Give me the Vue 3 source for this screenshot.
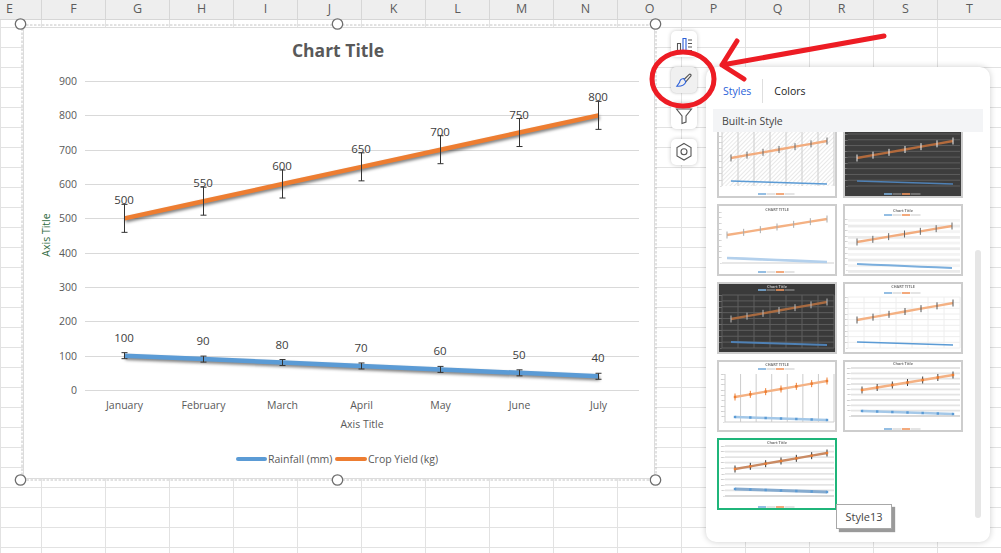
<script setup>
const columns = ['E','F','G','H','I','J','K','L','M','N','O','P','Q','R','S','T']
const months = ['January','February','March','April','May','June','July']
const crop = [500,550,600,650,700,750,800]
const rain = [100,90,80,70,60,50,40]
const ticks = [900,800,700,600,500,400,300,200,100,0]
const xAt = i => 124.5 + i * 79
const yAt = v => 390 - v * 0.3433
const line = vals => vals.map((v, i) => `${xAt(i)},${yAt(v)}`).join(' ')
const handles = [[20.5,24],[337.5,24],[655.5,24],[20.5,480],[337.5,480],[655.5,480]]

const lerp = (a, b, i) => a + (b - a) * i / 6
const thumbs = [
  { id:1, cls:'hatch', title:'', x0:14,x1:110, o0:32,o1:15, b0:55,b1:58, top:4,bottom:60, left:5,right:117, legend:68, hgrid:0, vgrid:1, orange:'#f2ac7e', err:'#666', blue:'#5b9bd5', bw:1.300 },
  { id:2, cls:'dark', title:'', x0:14,x1:110, o0:32,o1:15, b0:55,b1:58, top:8,bottom:60, left:5,right:117, legend:68, hgrid:1, vgrid:0, orange:'#b26a3c', err:'#eee', blue:'#4f81b5', bw:1.300 },
  { id:3, cls:'plain', title:'CHART TITLE', tY:5, x0:10,x1:110, o0:31,o1:15, b0:54,b1:58, top:8,bottom:59, left:5,right:117, legend:68, hgrid:0, vgrid:0, orange:'#f4b183', err:'#aaa', blue:'#b3d0ec', bw:2.600, axis:1 },
  { id:4, cls:'bands', title:'Chart Title', tY:6, legendTop:11, x0:14,x1:109, o0:38,o1:22, b0:60,b1:64, top:15,bottom:66, left:5,right:117, legend:0, hgrid:0, vgrid:0, orange:'#f2ac7e', err:'#666', blue:'#7aaedd', bw:2 },
  { id:5, cls:'charcoal', title:'Chart Title', tY:4, legendTop:8, x0:14,x1:110, o0:37,o1:20, b0:60,b1:63, top:13,bottom:66, left:5,right:117, legend:0, hgrid:1, vgrid:1, orange:'#a86a40', err:'#bbb', blue:'#4f81b5', bw:2 },
  { id:6, cls:'plain', title:'CHART TITLE', tY:4, legendTop:11, x0:14,x1:110, o0:38,o1:21, b0:60,b1:63, top:15,bottom:66, left:5,right:117, legend:0, hgrid:1, vgrid:1, faint:1, orange:'#f4b183', err:'#555', blue:'#5b9bd5', bw:1.300 },
  { id:7, cls:'plain', title:'CHART TITLE', tY:4, legendTop:9, x0:18,x1:110, o0:37,o1:21, b0:57,b1:60, top:14,bottom:62, left:8,right:117, legend:0, hgrid:0, vgrid:1, orange:'#f4b183', err:'#ed7d31', blue:'#a4c8e8', bw:2.400, markers:1, axis:1 },
  { id:8, cls:'plain', title:'Chart Title', tY:3, x0:19,x1:110, o0:30,o1:15, b0:51,b1:54, top:8,bottom:56, left:8,right:117, legend:69, hgrid:1, vgrid:0, heavy:1, orange:'#f4b183', err:'#444', blue:'#a4c8e8', bw:2.600, axis:1 },
  { id:9, cls:'plain', title:'Chart Title', tY:4, x0:18,x1:110, o0:31,o1:15, b0:51,b1:54, top:8,bottom:58, left:8,right:117, legend:69, hgrid:1, vgrid:0, heavy:1, orange:'#c98a63', err:'#333', blue:'#86abcf', bw:2.800, axis:1, selected:true },
]
const pts = (t, a, b) => Array.from({ length: 7 }, (_, i) => ({ x: lerp(t.x0, t.x1, i), y: lerp(a, b, i) }))
const str = list => list.map(p => `${p.x},${p.y}`).join(' ')
const hRows = t => Array.from({ length: 10 }, (_, i) => t.top + (t.bottom - t.top) * i / 9)
const vCols = t => Array.from({ length: 8 }, (_, i) => t.left + (t.right - t.left) * i / 7)
</script>

<template>
  <div class="sheet">
    <header class="columns">
      <div v-for="c in columns" :key="c" class="col">{{ c }}</div>
    </header>
    <div class="cells"></div>

    <svg class="chart" viewBox="0 0 1001 553" width="1001" height="553">
      <rect x="22" y="25" width="634" height="455" class="dash" />
      <rect x="23.500" y="27.500" width="631" height="451" class="plot-bg" />
      <text x="338" y="57" text-anchor="middle" class="title">Chart Title</text>
      <g v-for="t in ticks" :key="t">
        <line x1="85" x2="639" :y1="Math.round(yAt(t)) + .5" :y2="Math.round(yAt(t)) + .5" class="gridline" />
        <text x="77" :y="yAt(t) + 4" text-anchor="end" class="axis">{{ t }}</text>
      </g>
      <text v-for="(m, i) in months" :key="m" :x="xAt(i)" y="409" text-anchor="middle" class="axis">{{ m }}</text>
      <text x="362" y="428" text-anchor="middle" class="axis">Axis Title</text>
      <text transform="translate(50 235) rotate(-90)" text-anchor="middle" class="axis green">Axis Title</text>

      <polyline :points="line(crop)" class="series orange" />
      <polyline :points="line(rain)" class="series blue" />
      <g v-for="(v, i) in crop" :key="'c' + i" class="err">
        <line :x1="xAt(i)" :x2="xAt(i)" :y1="yAt(v) - 14" :y2="yAt(v) + 14" />
        <line :x1="xAt(i) - 3" :x2="xAt(i) + 3" :y1="yAt(v) + 14" :y2="yAt(v) + 14" />
        <line :x1="xAt(i) - 3" :x2="xAt(i) + 3" :y1="yAt(v) - 14" :y2="yAt(v) - 14" />
      </g>
      <g v-for="(v, i) in rain" :key="'r' + i" class="err">
        <line :x1="xAt(i)" :x2="xAt(i)" :y1="yAt(v) - 3" :y2="yAt(v) + 3" />
        <line :x1="xAt(i) - 3" :x2="xAt(i) + 3" :y1="yAt(v) - 3" :y2="yAt(v) - 3" />
        <line :x1="xAt(i) - 3" :x2="xAt(i) + 3" :y1="yAt(v) + 3" :y2="yAt(v) + 3" />
      </g>
      <text v-for="(v, i) in crop" :key="'cl' + i" :x="xAt(i) - .5" :y="yAt(v) - 14" text-anchor="middle" class="label">{{ v }}</text>
      <text v-for="(v, i) in rain" :key="'rl' + i" :x="xAt(i) - .5" :y="yAt(v) - 14" text-anchor="middle" class="label">{{ v }}</text>

      <line x1="238" x2="265" y1="459" y2="459" class="legend blue-s" />
      <text x="268" y="463" class="axis">Rainfall (mm)</text>
      <line x1="337" x2="365" y1="459" y2="459" class="legend orange-s" />
      <text x="368" y="463" class="axis">Crop Yield (kg)</text>

      <circle v-for="h in handles" :key="h.join()" :cx="h[0]" :cy="h[1]" r="5.200" class="handle" />
    </svg>

    <nav class="tools">
      <button class="tool">
        <svg width="18" height="18" viewBox="0 0 18 18"><path d="M2.500 16V8.500H5.500V16" class="ic" /><path d="M8 16V3.500H11V16" class="ic-blue" /><path d="M13 5H17M13 8.500H17M13 12H17M13 15.500H17" class="ic" /></svg>
      </button>
      <button class="tool active">
        <svg width="18" height="18" viewBox="0 0 18 18"><path d="M9 8.500 14 3.600C15.200 2.500 16.800 3.900 15.700 5.100L10.800 10.800" class="ic" /><path d="M8.700 7.500C6.300 7.800 4.800 9.500 4.600 11.300L1.800 15.200C6 15.400 9.800 14 10.800 10.800Z" class="ic-blue" /></svg>
      </button>
      <button class="tool">
        <svg width="18" height="18" viewBox="0 0 18 18"><path d="M1.500 2H16.500L11 9V15L7 16.500V9Z" class="ic" /></svg>
      </button>
      <button class="tool">
        <svg width="18" height="20" viewBox="0 0 18 20"><path d="M9 1.500 16 5.500V14L9 18 2 14V5.500Z" class="ic" /><circle cx="9" cy="9.800" r="3" class="ic" /></svg>
      </button>
    </nav>

    <aside class="panel">
      <div class="tabs">
        <span class="tab current">Styles</span>
        <span class="tab">Colors</span>
      </div>
      <h4 class="heading">Built-in Style</h4>
      <div class="gallery">
        <div class="thumbs">
          <div v-for="t in thumbs" :key="t.id" class="thumb" :class="{ selected: t.selected }">
            <svg viewBox="2 2 116 68" width="116" height="68">
              <defs>
                <pattern id="hatchfill" width="3" height="3" patternUnits="userSpaceOnUse" patternTransform="rotate(45)">
                  <rect width="3" height="3" fill="#fff" /><line x1="0" x2="0" y1="0" y2="3" stroke="#dcdcdc" stroke-width="1.300" />
                </pattern>
              </defs>
              <rect width="120" height="72" :class="t.cls" />
              <rect v-if="t.cls === 'hatch'" :x="t.left" :y="t.top" :width="t.right - t.left" :height="t.bottom - t.top" fill="url(#hatchfill)" />
              <template v-if="t.cls === 'bands'">
                <rect v-for="(y, i) in hRows(t)" :key="i" :x="t.left" :y="y" :width="t.right - t.left" height="2.800" :fill="i % 2 ? '#ebebeb' : '#f4f4f4'" />
              </template>
              <template v-if="t.hgrid">
                <line v-for="(y, i) in hRows(t)" :key="i" :x1="t.left" :x2="t.right" :y1="y" :y2="y" :stroke="t.cls === 'dark' || t.cls === 'charcoal' ? '#5e5e5e' : t.heavy ? '#e4e4e4' : '#eee'" :stroke-width="t.heavy ? 1.800 : 1" />
              </template>
              <template v-if="t.vgrid">
                <line v-for="(x, i) in vCols(t)" :key="i" :x1="x" :x2="x" :y1="t.top" :y2="t.bottom" :stroke="t.cls === 'charcoal' ? '#5e5e5e' : t.faint ? '#eee' : '#ccc'" stroke-width="1" />
              </template>
              <line v-if="t.axis" :x1="t.left" :x2="t.right" :y1="t.bottom" :y2="t.bottom" stroke="#cfcfcf" stroke-width="1" />

              <polyline :points="str(pts(t, t.b0, t.b1))" fill="none" :stroke="t.blue" :stroke-width="t.bw" />
              <polyline :points="str(pts(t, t.o0, t.o1))" fill="none" :stroke="t.orange" stroke-width="2.400" />
              <line v-for="(p, i) in pts(t, t.o0, t.o1)" :key="i" :x1="p.x" :x2="p.x" :y1="p.y - 3.500" :y2="p.y + 3.500" :stroke="t.err" stroke-width="1" />
              <template v-if="t.markers || t.heavy">
                <rect v-for="(p, i) in pts(t, t.o0, t.o1)" :key="'m' + i" :x="p.x - 1.200" :y="p.y - 1.200" width="2.400" height="2.400" fill="#ed7d31" />
                <rect v-for="(p, i) in pts(t, t.b0, t.b1)" :key="'n' + i" :x="p.x - 1.200" :y="p.y - 1.200" width="2.400" height="2.400" fill="#5b9bd5" />
              </template>

              <text v-if="t.title" x="60" :y="t.tY + 1.500" text-anchor="middle" class="mini-title" :class="{ invert: t.cls === 'charcoal' }">{{ t.title }}</text>
              <text v-for="(y, i) in hRows(t)" :key="'v' + i" :x="t.left - .5" :y="y + .8" text-anchor="end" class="mini-tick" :class="{ invert: t.cls === 'dark' || t.cls === 'charcoal' }">{{ 900 - i * 100 }}</text>
              <g>
                <rect x="41" :y="(t.legend || t.legendTop) - .8" width="8" height="1.600" fill="#7aaedd" />
                <rect x="59" :y="(t.legend || t.legendTop) - .8" width="8" height="1.600" fill="#f0955c" />
                <rect x="49.500" :y="(t.legend || t.legendTop) - .4" width="9" height=".8" fill="#bbb" />
                <rect x="67.500" :y="(t.legend || t.legendTop) - .4" width="10" height=".8" fill="#bbb" />
              </g>
            </svg>
          </div>
        </div>
      </div>
      <div class="scrollbar"></div>
    </aside>

    <div class="tip">Style13</div>

    <svg class="marks" viewBox="0 0 1001 553" width="1001" height="553">
      <ellipse cx="683" cy="79" rx="31" ry="27" class="mark" />
      <path d="M884 36 722 65M737 41 722 65 744 79" class="mark" />
    </svg>
  </div>
</template>

<style>
html, body { margin: 0; background: #fff; }
</style>

<style scoped>
.sheet {
  position: relative;
  width: 1001px;
  height: 553px;
  overflow: hidden;
  display: flex;
  flex-direction: column;
  background: #fff;
  font-family: "Open Sans", "Liberation Sans", sans-serif;
}
.columns {
  display: flex;
  height: 19px;
  margin-left: -22px;
  flex: none;
  background: #eeeeee;
  border-bottom: 1px solid #d6d6d6;
}
.col {
  flex: none;
  width: 63px;
  border-right: 1px solid #d6d6d6;
  text-align: center;
  font-size: 12.500px;
  line-height: 18px;
  color: #5c5c5c;
}
.cells {
  flex: 1;
  background-image:
    repeating-linear-gradient(to right, #e2e2e2 0 1px, transparent 1px 64px),
    repeating-linear-gradient(to bottom, #e2e2e2 0 1px, transparent 1px 20px);
  background-position: 41px 0, 0 7px;
}
.chart, .marks { position: absolute; left: 0; top: 0; }
.marks { pointer-events: none; }
.dash { fill: none; stroke: #c4c4c4; stroke-width: 1; stroke-dasharray: 2.500 1.500; }
.plot-bg { fill: #fff; stroke: #dcdcdc; stroke-width: 1; }
.title { font: 700 17.500px "Open Sans", sans-serif; fill: #595959; }
.gridline { stroke: #d9d9d9; stroke-width: 1; }
.axis { font: 10.500px "Open Sans", sans-serif; fill: #595959; }
.axis.green { fill: #2f6b3f; }
.label { font: 11.500px "Open Sans", sans-serif; fill: #404040; }
.series { fill: none; stroke-width: 4.500; filter: drop-shadow(1px 2px 1.500px rgba(0,0,0,.5)); }
.orange { stroke: #ed7d31; }
.blue { stroke: #5b9bd5; }
.err line { stroke: #333; stroke-width: 1; }
.legend { stroke-width: 4; stroke-linecap: round; }
.blue-s { stroke: #5b9bd5; }
.orange-s { stroke: #ed7d31; }
.handle { fill: #fff; stroke: #6e6e6e; stroke-width: 1.300; }
.tools {
  position: absolute;
  left: 671px;
  top: 31px;
  display: flex;
  flex-direction: column;
  gap: 10px;
}
.tool {
  width: 26px;
  height: 26px;
  padding: 0;
  border: 0;
  border-radius: 5px;
  background: #fff;
  box-shadow: 0 0 4px rgba(0,0,0,.22);
  display: flex;
  align-items: center;
  justify-content: center;
}
.tool.active { background: #f0f0f0; box-shadow: 0 0 3px rgba(0,0,0,.3); }
.ic { fill: none; stroke: #555; stroke-width: 1.100; }
.ic-blue { fill: none; stroke: #2b5fd9; stroke-width: 1.100; }
.panel {
  position: absolute;
  left: 706px;
  top: 67px;
  width: 284px;
  height: 475px;
  box-sizing: border-box;
  background: #fff;
  border-radius: 10px;
  box-shadow: 0 0 6px rgba(0,0,0,.2);
  display: flex;
  flex-direction: column;
  padding: 12px 7px 0;
}
.tabs { display: flex; height: 24px; align-items: center; padding-left: 10px; }
.tab { font-size: 10.500px; color: #222; line-height: 24px; }
.tab.current { color: #2b5fd9; padding-right: 11px; margin-right: 11px; border-right: 1px solid #dedede; }
.heading {
  margin: 6px 0 0;
  height: 23px;
  flex: none;
  padding-left: 9px;
  background: #f3f4f6;
  font-size: 10.500px;
  font-weight: 400;
  line-height: 25px;
  color: #444;
}
.gallery { flex: 1; overflow: hidden; padding-left: 4px; }
.thumbs {
  margin-top: -6px;
  display: grid;
  grid-template-columns: 120px 120px;
  grid-auto-rows: 72px;
  gap: 6px;
}
.thumb { border: 2px solid #cdcdcd; background: #fff; line-height: 0; }
.thumb svg { display: block; filter: blur(.4px); }
.thumb.selected { border-color: #1fb57a; }
.hatch, .plain, .bands { fill: #fff; }
.dark { fill: #3d3d3d; }
.charcoal { fill: #3a3a3a; }
.mini-title { font: 700 3.800px "Open Sans", sans-serif; fill: #777; }
.mini-tick { font: 2.200px "Open Sans", sans-serif; fill: #999; }
.invert { fill: #bbb; }
.scrollbar {
  position: absolute;
  left: 269px;
  top: 183px;
  width: 6px;
  height: 268px;
  border-radius: 3px;
  background: #e6e6e6;
}
.tip {
  position: absolute;
  left: 836px;
  top: 504px;
  width: 54px;
  height: 23px;
  border: 1px solid #a8a8a8;
  background: #fff;
  box-shadow: 3px 3px 1px #9a9a9a;
  font-size: 11px;
  line-height: 23px;
  text-align: center;
  color: #444;
}
.mark { fill: none; stroke: #ed1c24; stroke-width: 5; stroke-linecap: round; stroke-linejoin: round; }
</style>
